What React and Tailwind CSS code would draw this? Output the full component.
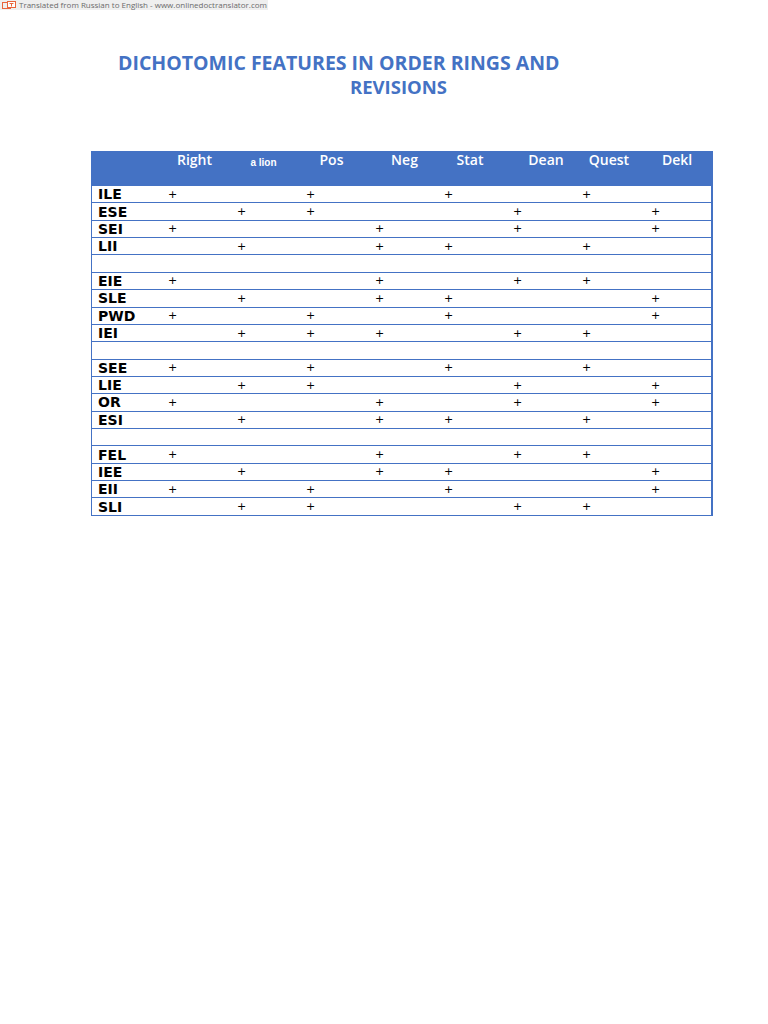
import React from 'react'

// header label + a small nudge so the labels sit where the source put them
const cols = [
  ['Right', 'pr-[8px]'],
  ['a lion', 'pr-[8px]'],
  ['Pos', 'pr-[10px]'],
  ['Neg', 'pr-[2px]'],
  ['Stat', 'pr-[9px]'],
  ['Dean', 'pl-[5px]'],
  ['Quest', 'pr-[7px]'],
  ['Dekl', 'pr-[4px]'],
]

// each row: label + indexes of columns holding a plus
const rows = [
  ['ILE', [0, 2, 4, 6]],
  ['ESE', [1, 2, 5, 7]],
  ['SEI', [0, 3, 5, 7]],
  ['LII', [1, 3, 4, 6]],
  null,
  ['EIE', [0, 3, 5, 6]],
  ['SLE', [1, 3, 4, 7]],
  ['PWD', [0, 2, 4, 7]],
  ['IEI', [1, 2, 3, 5, 6]],
  null,
  ['SEE', [0, 2, 4, 6]],
  ['LIE', [1, 2, 5, 7]],
  ['OR', [0, 3, 5, 7]],
  ['ESI', [1, 3, 4, 6]],
  null,
  ['FEL', [0, 3, 5, 6]],
  ['IEE', [1, 3, 4, 7]],
  ['EII', [0, 2, 4, 7]],
  ['SLI', [1, 2, 5, 6]],
]

const grid = 'grid grid-cols-[72px_69px_69px_69px_69px_69px_69px_69px_1fr]'

function TopBar() {
  return (
    <div className="flex items-center h-[10px] w-[268px] bg-[#efefef] pl-[2px]">
      <svg width="15" height="9" viewBox="0 0 15 9" className="mr-[2px]">
        <rect x="0.5" y="1.5" width="8" height="6" fill="none" stroke="#e8643c" strokeWidth="1" />
        <rect x="5.5" y="0.5" width="8" height="6" fill="#fff" stroke="#e8643c" strokeWidth="1" />
        <path d="M7.5 2.5h4M9.5 2.5v3" stroke="#e8643c" strokeWidth="1" />
      </svg>
      <span className="text-[8px] leading-none text-[#6b6b6b] font-['Open_Sans',sans-serif]">
        Translated from Russian to English - www.onlinedoctranslator.com
      </span>
    </div>
  )
}

export default function App() {
  return (
    <div className="w-[768px] h-[1024px] bg-white relative">
      <TopBar />

      <div className="font-['Open_Sans',sans-serif] font-bold text-[#4472c4] text-[19.5px] leading-[24px]">
        <div className="pl-[118px] pt-[41px]">DICHOTOMIC FEATURES IN ORDER RINGS AND</div>
        <div className="pl-[350px] text-[18.5px]">REVISIONS</div>
      </div>

      <div className="ml-[91px] mt-[52px] w-[622px] border-l border-r-2 border-[#4472c4]">
        <div className={`${grid} h-[35px] bg-[#4472c4] text-white font-['Open_Sans',sans-serif] font-semibold`}>
          <div />
          {cols.map(([c, nudge]) => (
            <div
              key={c}
              className={
                c === 'a lion'
                  ? `text-center pt-[4px] text-[10px] font-bold font-['Liberation_Sans',sans-serif] ${nudge}`
                  : `text-center text-[14px] leading-[18px] ${nudge}`
              }
            >
              {c}
            </div>
          ))}
        </div>
        {rows.map((r, i) => (
          <div
            key={i}
            className={`${grid} h-[17.37px] border-b border-[#4472c4] items-center`}
          >
            {r && (
              <>
                <div className="pl-[6px] font-['DejaVu_Sans',sans-serif] font-bold text-[14px] leading-none text-black">
                  {r[0]}
                </div>
                {cols.map(([c], k) => (
                  <div key={c} className="pl-[4px] font-['DejaVu_Sans',sans-serif] text-[11px] leading-none text-black">
                    {r[1].includes(k) ? '+' : ''}
                  </div>
                ))}
              </>
            )}
          </div>
        ))}
      </div>
    </div>
  )
}
